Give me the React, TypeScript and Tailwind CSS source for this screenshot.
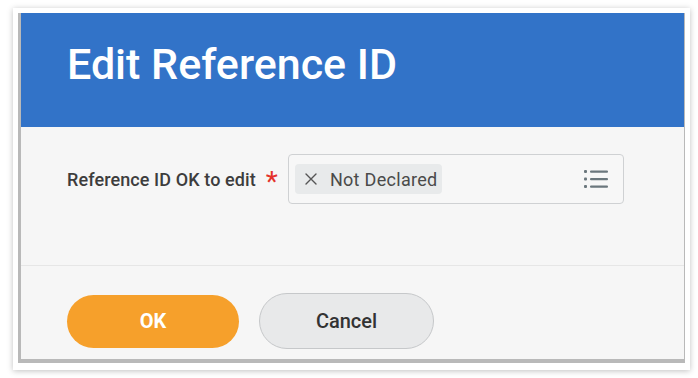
import React from 'react';

function ListIcon() {
  return (
    <svg width="24" height="22" viewBox="0 0 24 22" className="text-[#6b777d]">
      <rect x="0" y="2" width="3" height="3" rx="1" fill="currentColor" />
      <rect x="0" y="9.5" width="3" height="3" rx="1" fill="currentColor" />
      <rect x="0" y="17" width="3" height="3" rx="1" fill="currentColor" />
      <rect x="6" y="2.5" width="18" height="2.2" rx="1" fill="currentColor" />
      <rect x="6" y="10" width="18" height="2.2" rx="1" fill="currentColor" />
      <rect x="6" y="17.5" width="18" height="2.2" rx="1" fill="currentColor" />
    </svg>
  );
}

function RemoveIcon() {
  return (
    <svg width="12" height="12" viewBox="0 0 12 12" className="text-[#555]">
      <path d="M1 1 L11 11 M11 1 L1 11" stroke="currentColor" strokeWidth="1.4" strokeLinecap="round" />
    </svg>
  );
}

export default function App() {
  return (
    <div className="w-[698px] h-[378px] bg-white pt-[8px] pl-[13px] font-['Roboto',sans-serif]">
      {/* outer frame */}
      <div className="w-[677px] h-[362px] bg-white p-[5px] shadow-[0_1px_6px_rgba(0,0,0,0.25)]">
        <div className="h-[350px] flex flex-col bg-[#f6f6f6] border-l-[3px] border-b-[4px] border-r-[1px] border-[#b9b9b9]">
          {/* header */}
          <div className="h-[114px] bg-[#3273c8] flex items-start pl-[46px] pt-[23px]">
            <h1 className="text-white text-[43px] font-medium leading-[56px]">Edit Reference ID</h1>
          </div>

          {/* body */}
          <div className="h-[139px] flex items-start pl-[46px] pt-[27px] border-b border-[#e6e6e6]">
            <div className="flex items-center h-[50px]">
              <span className="text-[18px] font-medium text-[#3d3d3d] tracking-[0.1px]">Reference ID OK to edit</span>
              <span className="ml-[10px] text-[#e4322b] text-[28px] leading-none mt-[6px]">*</span>
              <div className="ml-[10px] w-[336px] h-[50px] border border-[#cfd1d3] rounded-[4px] bg-[#f7f7f7] flex items-center pl-[6px] pr-[15px]">
                <div className="h-[30px] bg-[#e8eaeb] rounded-[4px] flex items-center pl-[10px] pr-[4px]">
                  <RemoveIcon />
                  <span className="ml-[13px] text-[18px] text-[#4a4a4a] tracking-[0.3px]">Not Declared</span>
                </div>
                <div className="ml-auto">
                  <ListIcon />
                </div>
              </div>
            </div>
          </div>

          {/* footer */}
          <div className="flex items-center gap-[20px] pl-[46px] pt-[27px]">
            <button className="w-[172px] h-[53px] rounded-full bg-[#f6a02b] text-white text-[20px] font-bold">OK</button>
            <button className="w-[175px] h-[56px] rounded-full bg-[#e8e9ea] border border-[#c6c8ca] text-[#333] text-[20px] font-medium">Cancel</button>
          </div>
        </div>
      </div>
    </div>
  );
}
